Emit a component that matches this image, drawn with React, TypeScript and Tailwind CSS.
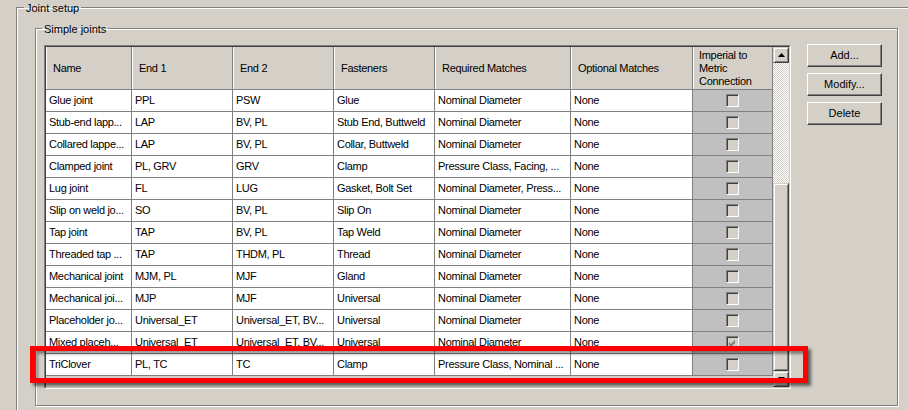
import type { ReactNode } from 'react'

type Row = [string, string, string, string, string, string, boolean]

const rows: Row[] = [
  ['Glue joint', 'PPL', 'PSW', 'Glue', 'Nominal Diameter', 'None', false],
  ['Stub-end lapp...', 'LAP', 'BV, PL', 'Stub End, Buttweld', 'Nominal Diameter', 'None', false],
  ['Collared lappe...', 'LAP', 'BV, PL', 'Collar, Buttweld', 'Nominal Diameter', 'None', false],
  ['Clamped joint', 'PL, GRV', 'GRV', 'Clamp', 'Pressure Class, Facing, ...', 'None', false],
  ['Lug joint', 'FL', 'LUG', 'Gasket, Bolt Set', 'Nominal Diameter, Press...', 'None', false],
  ['Slip on weld jo...', 'SO', 'BV, PL', 'Slip On', 'Nominal Diameter', 'None', false],
  ['Tap joint', 'TAP', 'BV, PL', 'Tap Weld', 'Nominal Diameter', 'None', false],
  ['Threaded tap ...', 'TAP', 'THDM, PL', 'Thread', 'Nominal Diameter', 'None', false],
  ['Mechanical joint', 'MJM, PL', 'MJF', 'Gland', 'Nominal Diameter', 'None', false],
  ['Mechanical joi...', 'MJP', 'MJF', 'Universal', 'Nominal Diameter', 'None', false],
  ['Placeholder jo...', 'Universal_ET', 'Universal_ET, BV...', 'Universal', 'Nominal Diameter', 'None', false],
  ['Mixed placeh...', 'Universal_ET', 'Universal_ET, BV...', 'Universal', 'Nominal Diameter', 'None', true],
  ['TriClover', 'PL, TC', 'TC', 'Clamp', 'Pressure Class, Nominal ...', 'None', false],
]

// widths include the 1px grid line on the right
const widths = ['w-[86px]', 'w-[101px]', 'w-[101px]', 'w-[101px]', 'w-[136px]', 'w-[122px]']

function Check({ on }: { on: boolean }) {
  return (
    <div className="w-[13px] h-[13px] bg-[#d4d0c8] border border-t-[#808080] border-l-[#808080] border-r-white border-b-white shadow-[inset_1px_1px_0_#404040] flex items-center justify-center">
      {on && (
        <svg width="7" height="7" viewBox="0 0 7 7" className="mt-px ml-px">
          <path d="M0 2 L2 4 L6 0 L6 3 L2 7 L0 5 Z" fill="#808080" />
        </svg>
      )}
    </div>
  )
}

function Btn({ children }: { children: ReactNode }) {
  return (
    <button className="w-[75px] h-[23px] bg-[#d4d0c8] border border-t-white border-l-white border-r-[#404040] border-b-[#404040] shadow-[inset_-1px_-1px_0_#808080] leading-none">
      {children}
    </button>
  )
}

function Arrow({ up }: { up?: boolean }) {
  return (
    <div className="h-[16px] bg-[#d4d0c8] border border-t-[#d4d0c8] border-l-[#d4d0c8] border-r-[#404040] border-b-[#404040] shadow-[inset_1px_1px_0_#fff,inset_-1px_-1px_0_#808080] flex items-center justify-center">
      <svg width="7" height="4" viewBox="0 0 7 4">
        <path d={up ? 'M0 4 L3.5 0 L7 4 Z' : 'M0 0 L7 0 L3.5 4 Z'} fill="#000" />
      </svg>
    </div>
  )
}

export default function App() {
  return (
    <div className="relative w-[908px] h-[410px] overflow-hidden bg-[#d4d0c8] text-black text-[11px] font-['Liberation_Sans',Arial,sans-serif]">
      <fieldset className="ml-[16px] w-[920px] h-[440px] border border-[#808080] shadow-[inset_1px_1px_0_#fff,1px_1px_0_#fff]">
        <legend className="ml-[7px] px-[2px] pt-[2px] leading-[13px]">Joint setup</legend>
        <fieldset className="ml-[18px] mt-[6px] w-[863px] h-[385px] border border-[#808080] shadow-[inset_1px_1px_0_#fff,1px_1px_0_#fff]">
          <legend className="ml-[6px] px-[2px] pt-[2px] leading-[13px]">Simple joints</legend>
          <div className="flex items-start gap-[16px] pl-[8px] pt-[9px]">
            <div className="w-[747px] h-[344px] tracking-[-0.3px] border border-t-[#808080] border-l-[#808080] border-r-white border-b-white">
              <div className="h-full flex border border-t-[#404040] border-l-[#404040] border-r-[#d4d0c8] border-b-[#d4d0c8]">
                <div className="w-[727px] flex flex-col bg-[#d4d0c8]">
                  <div className="flex h-[43px] border-b border-[#808080]">
                    {['Name', 'End 1', 'End 2', 'Fasteners', 'Required Matches', 'Optional Matches'].map((h, i) => (
                      <div key={h} className={`${widths[i]} shrink-0 flex items-center pl-[6px] pt-px border-l border-l-white border-r border-r-[#808080]`}>
                        {h}
                      </div>
                    ))}
                    <div className="w-[80px] shrink-0 flex items-center pl-[5px] leading-[13px] border-l border-l-white border-r border-r-[#808080]">
                      <span>Imperial to<br />Metric<br />Connection</span>
                    </div>
                  </div>
                  {rows.map((r) => (
                    <div key={r[0]} className="flex h-[22px] border-b border-[#808080] bg-white">
                      {r.slice(0, 6).map((c, i) => (
                        <div key={i} className={`${widths[i]} shrink-0 flex items-center pl-[3px] whitespace-nowrap overflow-hidden border-r border-[#808080]`}>
                          {c as string}
                        </div>
                      ))}
                      <div className="w-[80px] shrink-0 flex items-center justify-center pr-px bg-[#c0c0c0] border-r border-[#808080]">
                        <Check on={r[6]} />
                      </div>
                    </div>
                  ))}
                </div>
                <div className="w-[16px] flex flex-col">
                  <Arrow up />
                  <div className="h-[120px] bg-[repeating-conic-gradient(#fff_0_25%,#d4d0c8_0_50%)] bg-[length:2px_2px]" />
                  <div className="h-[188px] bg-[#d4d0c8] border border-t-[#d4d0c8] border-l-[#d4d0c8] border-r-[#404040] border-b-[#404040] shadow-[inset_1px_1px_0_#fff,inset_-1px_-1px_0_#808080]" />
                  <Arrow />
                </div>
              </div>
            </div>
            <div className="-mt-px flex flex-col gap-[6px]">
              <Btn>Add...</Btn>
              <Btn>Modify...</Btn>
              <Btn>Delete</Btn>
            </div>
          </div>
        </fieldset>
      </fieldset>
      <div className="absolute left-[30px] top-[346px] w-[778px] h-[37px] border-[5px] border-[#ff0000] shadow-[3px_3px_3px_rgba(0,0,0,0.55),inset_3px_3px_3px_rgba(0,0,0,0.4)]" />
    </div>
  )
}
